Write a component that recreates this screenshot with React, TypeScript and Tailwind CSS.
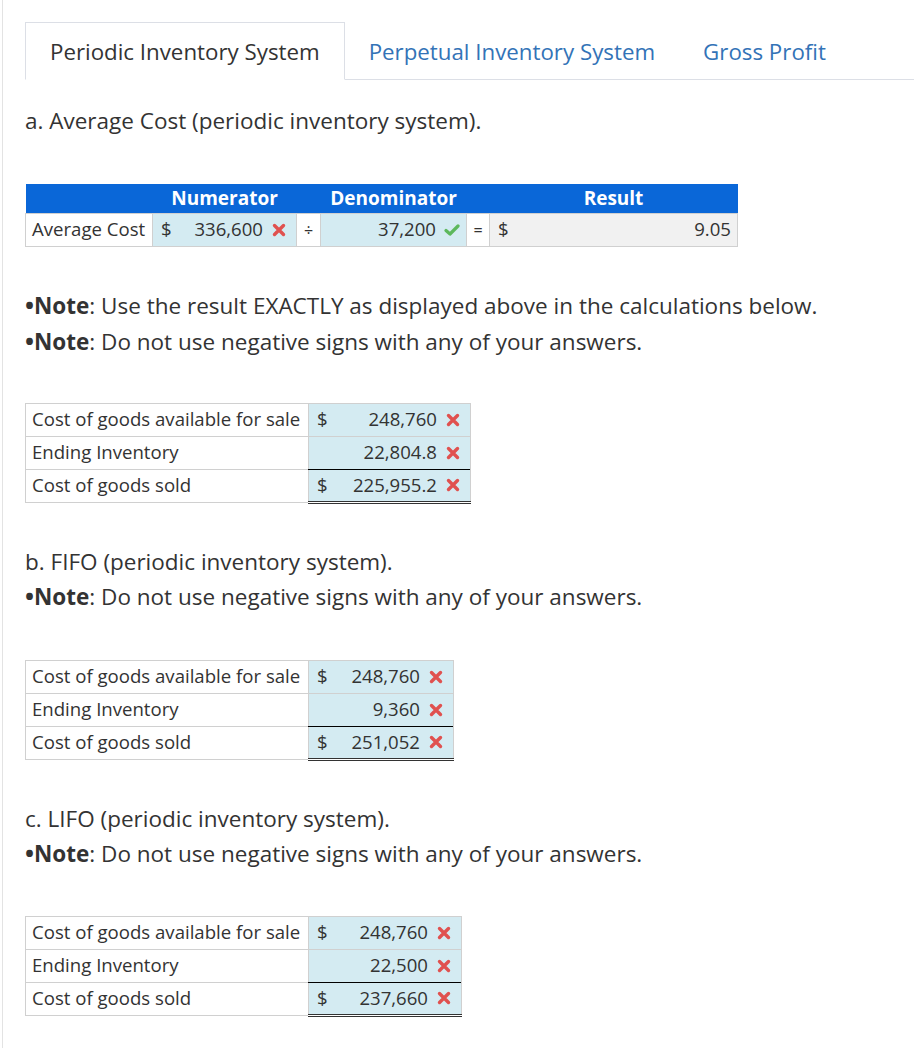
import React from "react";

const Cross = () => (
  <svg width="14" height="14" viewBox="0 0 14 14" className="inline-block shrink-0">
    <path d="M2.5 2.5 L11.5 11.5 M11.5 2.5 L2.5 11.5" stroke="#e0514f" strokeWidth="3.4" strokeLinecap="round" />
  </svg>
);

const Check = () => (
  <svg width="16" height="14" viewBox="0 0 16 14" className="inline-block shrink-0">
    <path d="M2 7.5 L6 11 L14 3" stroke="#5cb85c" strokeWidth="3.2" fill="none" strokeLinecap="round" strokeLinejoin="round" />
  </svg>
);

type Row = { label: string; value: string; dollar: boolean };

function CogsTable({ rows, valueWidth }: { rows: Row[]; valueWidth: string }) {
  return (
    <table className="border-collapse text-[18.6px] leading-none">
      <tbody>
        {rows.map((r, i) => {
          const last = i === rows.length - 1;
          return (
            <tr key={r.label} className="h-[33px]">
              <td className="w-[283px] border border-[#d0d0d0] pl-[6px] pr-1 whitespace-nowrap">{r.label}</td>
              <td
                className={`${valueWidth} bg-[#d4ebf2] border-x border-[#d0d0d0] ${
                  last ? "border-t border-t-black border-b-[3px] border-b-[#333] border-double" : "border-y"
                }`}
              >
                <div className="flex items-center pl-[8px] pr-[10px]">
                  <span className="w-[14px]">{r.dollar ? "$" : ""}</span>
                  <span className="flex-1 text-right pr-[9px]">{r.value}</span>
                  <Cross />
                </div>
              </td>
            </tr>
          );
        })}
      </tbody>
    </table>
  );
}

const Bullet = () => <b className="text-[24px]">•</b>;

export default function App() {
  return (
    <div className="min-h-[1048px] ml-[2px] border-l border-[#e3e3e3] pl-[22px] pt-[22px] text-[#333] font-['Open_Sans',sans-serif]">
      {/* tabs */}
      <div className="flex border-b border-[#dcdfe6] text-[22.3px] leading-none">
        <div className="h-[58px] -mb-px px-[24px] pt-[3px] flex items-center border border-[#dcdfe6] border-b-white bg-white text-[#333]">
          Periodic Inventory System
        </div>
        <div className="h-[57px] px-[24px] pt-[3px] flex items-center text-[#3373b7]">Perpetual Inventory System</div>
        <div className="h-[57px] px-[24px] pt-[3px] flex items-center text-[#3373b7]">Gross Profit</div>
      </div>

      <p className="mt-[23px] text-[22.5px] leading-[35px]">a. Average Cost (periodic inventory system).</p>

      {/* average cost table */}
      <table className="mt-[46px] border-collapse text-[18.6px] leading-none">
        <thead>
          <tr className="h-[29px] bg-[#0a67d8] text-white font-bold text-[19px]">
            <th className="w-[127px]"></th>
            <th className="w-[144px] text-center">Numerator</th>
            <th className="w-[24px]"></th>
            <th className="w-[146px] text-center">Denominator</th>
            <th className="w-[23px]"></th>
            <th className="w-[248px] text-center">Result</th>
          </tr>
        </thead>
        <tbody>
          <tr className="h-[33px]">
            <td className="border border-[#d0d0d0] pl-[6px] whitespace-nowrap">Average Cost</td>
            <td className="border border-[#d0d0d0] bg-[#d4ebf2]">
              <div className="flex items-center pl-[8px] pr-[10px]">
                <span>$</span>
                <span className="flex-1 text-right pr-[9px]">336,600</span>
                <Cross />
              </div>
            </td>
            <td className="border border-[#d0d0d0] text-center text-[16px]">÷</td>
            <td className="border border-[#d0d0d0] bg-[#d4ebf2]">
              <div className="flex items-center pl-[8px] pr-[6px]">
                <span className="flex-1 text-right pr-[8px]">37,200</span>
                <Check />
              </div>
            </td>
            <td className="border border-[#d0d0d0] text-center text-[16px]">=</td>
            <td className="border border-[#d0d0d0] bg-[#f1f1f1]">
              <div className="flex items-center pl-[8px] pr-[6px]">
                <span>$</span>
                <span className="flex-1 text-right">9.05</span>
              </div>
            </td>
          </tr>
        </tbody>
      </table>

      <div className="mt-[40px] text-[22.5px] leading-[35px]">
        <p><Bullet /><b>Note</b>: Use the result EXACTLY as displayed above in the calculations below.</p>
        <p><Bullet /><b>Note</b>: Do not use negative signs with any of your answers.</p>
      </div>

      <div className="mt-[44px]">
        <CogsTable
          valueWidth="w-[162px]"
          rows={[
            { label: "Cost of goods available for sale", value: "248,760", dollar: true },
            { label: "Ending Inventory", value: "22,804.8", dollar: false },
            { label: "Cost of goods sold", value: "225,955.2", dollar: true },
          ]}
        />
      </div>

      <div className="mt-[41px] text-[22.5px] leading-[34px]">
        <p>b. FIFO (periodic inventory system).</p>
        <p><Bullet /><b>Note</b>: Do not use negative signs with any of your answers.</p>
      </div>

      <div className="mt-[46px]">
        <CogsTable
          valueWidth="w-[145px]"
          rows={[
            { label: "Cost of goods available for sale", value: "248,760", dollar: true },
            { label: "Ending Inventory", value: "9,360", dollar: false },
            { label: "Cost of goods sold", value: "251,052", dollar: true },
          ]}
        />
      </div>

      <div className="mt-[41px] text-[22.5px] leading-[34px]">
        <p>c. LIFO (periodic inventory system).</p>
        <p><Bullet /><b>Note</b>: Do not use negative signs with any of your answers.</p>
      </div>

      <div className="mt-[45px]">
        <CogsTable
          valueWidth="w-[153px]"
          rows={[
            { label: "Cost of goods available for sale", value: "248,760", dollar: true },
            { label: "Ending Inventory", value: "22,500", dollar: false },
            { label: "Cost of goods sold", value: "237,660", dollar: true },
          ]}
        />
      </div>
    </div>
  );
}
